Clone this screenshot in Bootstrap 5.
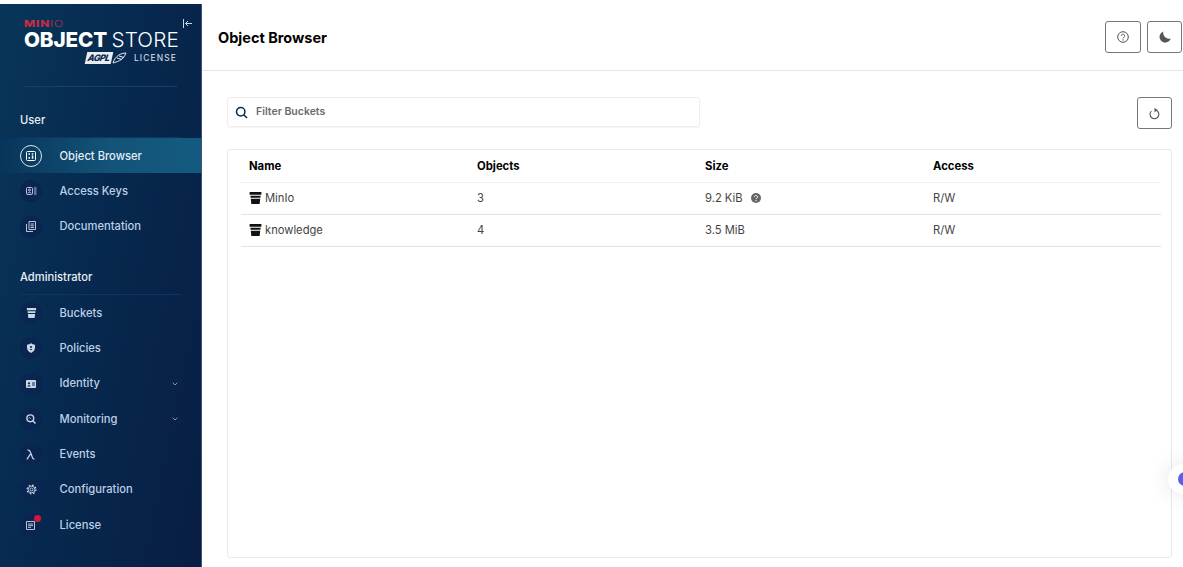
<!doctype html>
<html lang="en">
<head>
<meta charset="utf-8">
<title>Object Browser</title>
<link href="https://cdn.jsdelivr.net/npm/bootstrap@5.3.0/dist/css/bootstrap.min.css" rel="stylesheet">
<style>
html,body{height:567px;overflow:hidden;background:#fff}
body{font-family:Inter,"Liberation Sans",sans-serif;font-size:11.2px;color:#444}
.app-shell{height:567px}
.side-panel{width:202px;margin-top:4px;height:563px;flex:none;position:relative;color:#c9d6e6;background:linear-gradient(102deg,#083658 0%,#07294f 45%,#081d44 100%);border-right:1px solid #3b5378}
.logo-block{height:83px;margin:0 24px;border-bottom:1px solid #14406a;padding-top:15px;color:#fff;line-height:1}
.logo-minio{font-size:9px;font-weight:800;letter-spacing:.6px;color:#c72c48;height:9px;line-height:9px;transform:scaleX(1.32);transform-origin:left center}
.logo-minio span{font-weight:300}
.logo-title{font-size:20.7px;font-weight:800;letter-spacing:-.15px;margin-top:1px;white-space:nowrap;height:22px;line-height:22px}
.logo-title span{font-weight:300;letter-spacing:.15px}
.logo-license{font-size:8.5px;letter-spacing:1.1px;font-weight:400;color:#dfe6ee;margin-top:1px;gap:7px}
.agpl-mark{font-size:8.8px;font-weight:800;font-style:italic;background:#e9edf2;color:#08264c;padding:0 2px;height:12px;line-height:11px;transform:skewX(-12deg);letter-spacing:-.5px}
.collapse-btn{position:absolute;top:11px;left:182px;width:11px;height:11px;display:block}
.section-head{height:51px;margin:0 20px;border-bottom:1px solid #0f3560;color:#e8eef5;font-size:11.2px;font-weight:500;padding-bottom:8px;display:flex;align-items:flex-end}
.nav-entry{height:35.33px;padding:1px 20px 0;color:#bcd0e6;font-size:11.2px;font-weight:500;text-decoration:none;gap:17.5px}
.nav-entry:hover{color:#fff}
.nav-entry.is-on{color:#e6eef6;background:linear-gradient(90deg,#08345a 0%,#135478 55%,#145a80 100%)}
.entry-disc{width:22px;height:22px;border-radius:50%;background:#0a2550;flex:none;display:flex;align-items:center;justify-content:center;color:#c9d8e8;position:relative}
.is-on .entry-disc{background:transparent;border:1px solid #dbe5ee;color:#fff}
.alert-dot{position:absolute;width:7px;height:7px;border-radius:50%;background:#d3163f;top:1px;right:1px}
.chev-box{width:12px;height:12px;background:#0a2248;border-radius:1px;display:flex;align-items:center;justify-content:center;margin-left:auto}
.top-bar{height:67px;border-bottom:1px solid #e5e5e5;padding-left:16px;padding-right:1px}
.top-bar h1{font-size:14.5px;font-weight:700;color:#000;margin:2px 0 0}
.square-btn{width:36px;height:32px;padding:0;border:1px solid #777;border-radius:3px;background:#fff;display:flex;align-items:center;justify-content:center;color:#555}
.btn-tight{width:35px}
.top-actions{column-gap:6px}
.work-area{padding:26px 11px 9px 25px;flex:1;min-height:0}
.filter-box{width:473px;height:30px;border:1px solid #eee;border-radius:3px;box-shadow:0 1px 1px rgba(0,0,0,.04);padding-left:7px;gap:8px}
.filter-box input{border:0;outline:0;flex:1;font-size:10.5px;font-weight:600;color:#444;padding:0;font-family:inherit}
.filter-box input::placeholder{color:#6b6b6b;opacity:1}
.bucket-panel{flex:1;margin-top:20px;border:1px solid #eaeaea;border-radius:3px;padding:0 10px 0 13px;min-height:0}
.bucket-grid{table-layout:fixed;width:920px;margin:0;font-size:11.2px}
.bucket-grid th,.bucket-grid td{height:32px;padding:0 0 0 8px;vertical-align:middle;border-bottom:1px solid #e3e3e3;box-shadow:none}
.bucket-grid th{font-weight:700;color:#000;font-size:11.3px;border-bottom-color:#f1f1f1;padding-top:2px}
.bucket-grid td{color:#444;font-weight:400}
.bucket-name{gap:3px}
.help-mark{margin-left:8px;vertical-align:-1px}
.col-w{width:228px}
.chat-bubble{position:absolute;left:1168px;top:464px;width:30px;height:30px;border-radius:50%;background:#fff;box-shadow:0 0 22px rgba(0,0,0,.12);display:flex;align-items:center;padding-left:10px}
.chat-bubble::after{content:"";width:14px;height:14px;flex:none;border-radius:50%;background:#5b5ee8}
</style>
</head>
<body>
<div class="app-shell d-flex">
  <aside class="side-panel d-flex flex-column">
    <div class="logo-block">
      <div class="logo-minio">MIN<span>IO</span></div>
      <div class="logo-title">OBJECT <span>STORE</span></div>
      <div class="logo-license d-flex align-items-center justify-content-end">
        <span class="d-flex align-items-center"><span class="agpl-mark">AGPL</span>
        <svg width="15" height="12" viewBox="0 0 15 12" fill="none" stroke="#e9edf2" stroke-width="1"><path d="M1 11C4 10 11 9 14 1 9 1 3 4 1 11zM5 6l5 1.500M7 4l5 1.500"/></svg></span>
        <span>LICENSE</span>
      </div>
    </div>
    <a class="collapse-btn" href="#" aria-label="Collapse"><svg width="11" height="11" viewBox="0 0 11 11" fill="none" stroke="#c9d6e6" stroke-width="1"><path d="M1.500 1v9M10 5.500H3.500M6 3 3.500 5.500 6 8"/></svg></a>

    <div class="section-head">User</div>
    <nav class="nav flex-column">
      <a class="nav-entry is-on d-flex align-items-center" href="#"><span class="entry-disc"><svg width="10" height="10" viewBox="0 0 10 10" fill="none" stroke="currentColor"><rect x=".5" y=".5" width="9" height="9" rx="1"/><path fill="currentColor" stroke="none" d="M2.500 2.200h1.500v1.500H2.500zM5.800 2.200h1.500v1.500H5.800zM2.500 6h1.500v1.800H2.500zM5.800 4.500h1.500v3.300H5.800z"/></svg></span>Object Browser</a>
      <a class="nav-entry d-flex align-items-center" href="#"><span class="entry-disc"><svg width="11" height="8" viewBox="0 0 11 8" fill="none" stroke="currentColor" stroke-width=".9"><rect x=".5" y=".5" width="6" height="7" rx="1"/><circle cx="3.500" cy="3" r="1"/><path d="M1.700 6.500c.3-1.600 3.300-1.600 3.600 0"/><path d="M8 1h2.500M8 3h2.500M8 5h2.500M8 7h2.500"/></svg></span>Access Keys</a>
      <a class="nav-entry d-flex align-items-center" href="#"><span class="entry-disc"><svg width="10" height="11" viewBox="0 0 10 11" fill="none" stroke="currentColor" stroke-width=".9"><path d="M3 .5h6.500v8H3zM.5 3v7.500H7"/><path d="M4.500 3h3.500M4.500 4.800h3.500M4.500 6.500h3.500"/></svg></span>Documentation</a>
    </nav>

    <div class="section-head">Administrator</div>
    <nav class="nav flex-column">
      <a class="nav-entry d-flex align-items-center" href="#"><span class="entry-disc"><svg width="11" height="10" viewBox="0 0 14 13" fill="currentColor"><path d="M1 0h12v3H1zM1.800 4.200h10.400l-.3 2.400H2.100zM2.300 7.800h9.400l-.6 5.200H2.900z"/></svg></span>Buckets</a>
      <a class="nav-entry d-flex align-items-center" href="#"><span class="entry-disc"><svg width="8" height="10" viewBox="0 0 8 10"><path fill="currentColor" d="M4 0l1 1 3 .8v3C8 7.300 6 9 4 10 2 9 0 7.300 0 4.800v-3L3 1z"/><circle cx="4" cy="4" r="1.100" fill="#0a2850"/><path d="M2.600 7c.2-1.500 2.600-1.500 2.800 0z" fill="#0a2850"/></svg></span>Policies</a>
      <a class="nav-entry d-flex align-items-center" href="#"><span class="entry-disc"><svg width="10" height="8" viewBox="0 0 10 8"><rect width="10" height="8" rx="1" fill="currentColor"/><circle cx="3" cy="3.300" r="1.100" fill="#0a2850"/><path d="M1.300 6.500c.3-1.700 3.100-1.700 3.400 0z" fill="#0a2850"/><path d="M6 3h3M6 5h3" stroke="#0a2850"/></svg></span>Identity<span class="chev-box"><svg width="6" height="4" viewBox="0 0 6 4" fill="none" stroke="#9fb3ca" stroke-width=".8"><path d="M.7.700 3 3 5.300.700"/></svg></span></a>
      <a class="nav-entry d-flex align-items-center" href="#"><span class="entry-disc"><svg width="10" height="10" viewBox="0 0 10 10" fill="none" stroke="currentColor" stroke-width="1.400"><circle cx="4.300" cy="4.300" r="3.400"/><path d="M6.800 6.800 9.500 9.500"/><path d="M2.500 4.500l1.300-1 1 1.300" stroke-width=".8"/></svg></span>Monitoring<span class="chev-box"><svg width="6" height="4" viewBox="0 0 6 4" fill="none" stroke="#9fb3ca" stroke-width=".8"><path d="M.7.700 3 3 5.300.700"/></svg></span></a>
      <a class="nav-entry d-flex align-items-center" href="#"><span class="entry-disc"><svg width="10" height="11" viewBox="0 0 10 11" fill="none" stroke="currentColor" stroke-width="1.200"><path d="M1.500.800c2 0 2.500 1 3 2.500l2 5.500c.3.900.9 1.300 2 1.300M4.900 4.300.9 10.400"/></svg></span>Events</a>
      <a class="nav-entry d-flex align-items-center" href="#"><span class="entry-disc"><svg width="11" height="11" viewBox="0 0 11 11" fill="none" stroke="currentColor"><circle cx="5.500" cy="5.500" r="1.500" stroke-width=".9"/><circle cx="5.500" cy="5.500" r="3.400" stroke-width=".9"/><circle cx="5.500" cy="5.500" r="4.400" stroke-width="1.200" stroke-dasharray="1.700 1.750"/></svg></span>Configuration</a>
      <a class="nav-entry d-flex align-items-center" href="#"><span class="entry-disc"><svg width="10" height="9" viewBox="0 0 10 9" fill="none" stroke="currentColor" stroke-width=".9"><path d="M.5.500h8v8h-8zM2 3h5M2 4.700h5M2 6.400h3"/></svg><span class="alert-dot"></span></span>License</a>
    </nav>
  </aside>

  <main class="flex-grow-1 d-flex flex-column mt-1 min-w-0">
    <header class="top-bar d-flex align-items-center justify-content-between">
      <h1>Object Browser</h1>
      <div class="d-flex top-actions">
        <button class="square-btn" type="button" aria-label="Help"><svg width="12" height="12" viewBox="0 0 12 12" fill="none" stroke="currentColor"><circle cx="6" cy="6" r="5.300"/><path d="M4.300 4.800c0-2.200 3.400-2.200 3.400 0 0 1.300-1.700 1.200-1.700 2.700"/><path d="M6 8.300v1.200"/></svg></button>
        <button class="square-btn btn-tight" type="button" aria-label="Dark mode"><svg width="12" height="12" viewBox="0 0 12 12" fill="currentColor"><path d="M4.300.500A5.700 5.700 0 1 0 11.700 7.500 6 6 0 0 1 4.300.500z"/></svg></button>
      </div>
    </header>
    <section class="work-area d-flex flex-column">
      <div class="d-flex justify-content-between align-items-start">
        <label class="filter-box d-flex align-items-center m-0">
          <svg width="13" height="13" viewBox="0 0 13 13" fill="none" stroke="#0b2a4e" stroke-width="1.500"><circle cx="5.700" cy="5.700" r="4.200"/><path d="M8.800 8.800 12 12"/></svg>
          <input type="text" placeholder="Filter Buckets">
        </label>
        <button class="square-btn btn-tight" type="button" aria-label="Refresh"><svg width="11" height="13" viewBox="0 0 11 13" fill="none" stroke="currentColor" stroke-width="1.100"><path d="M7.300 3.300A4.400 4.400 0 1 1 2.300 4.200"/><path d="M5.500 1v4.300L8.800 3.100" fill="currentColor" stroke="none"/></svg></button>
      </div>
      <div class="bucket-panel">
        <table class="table bucket-grid">
          <colgroup><col class="col-w"><col class="col-w"><col class="col-w"><col></colgroup>
          <thead><tr><th>Name</th><th>Objects</th><th>Size</th><th>Access</th></tr></thead>
          <tbody>
            <tr><td><span class="bucket-name d-flex align-items-center"><svg width="13" height="12" viewBox="0 0 14 13" fill="#111"><path d="M.6 0h12.800v2.900H.6zM1.400 4h11.200l-.3 2.200H1.700zM1.900 7.300h10.200l-.6 5.700H2.500z"/></svg>MinIo</span></td><td>3</td><td>9.2 KiB<svg class="help-mark" width="10" height="10" viewBox="0 0 10 10"><circle cx="5" cy="5" r="5" fill="#666"/><path d="M3.400 4c0-2 3.200-2 3.200 0 0 1.200-1.600 1-1.600 2.100" fill="none" stroke="#fff" stroke-width="1"/><path d="M5 7v1.200" stroke="#fff" stroke-width="1"/></svg></td><td>R/W</td></tr>
            <tr><td><span class="bucket-name d-flex align-items-center"><svg width="13" height="12" viewBox="0 0 14 13" fill="#111"><path d="M.6 0h12.800v2.900H.6zM1.400 4h11.200l-.3 2.200H1.700zM1.900 7.300h10.200l-.6 5.700H2.500z"/></svg>knowledge</span></td><td>4</td><td>3.5 MiB</td><td>R/W</td></tr>
          </tbody>
        </table>
      </div>
    </section>
  </main>
</div>
<div class="chat-bubble"></div>
<script src="https://cdn.jsdelivr.net/npm/bootstrap@5.3.0/dist/js/bootstrap.bundle.min.js"></script>
</body>
</html>
